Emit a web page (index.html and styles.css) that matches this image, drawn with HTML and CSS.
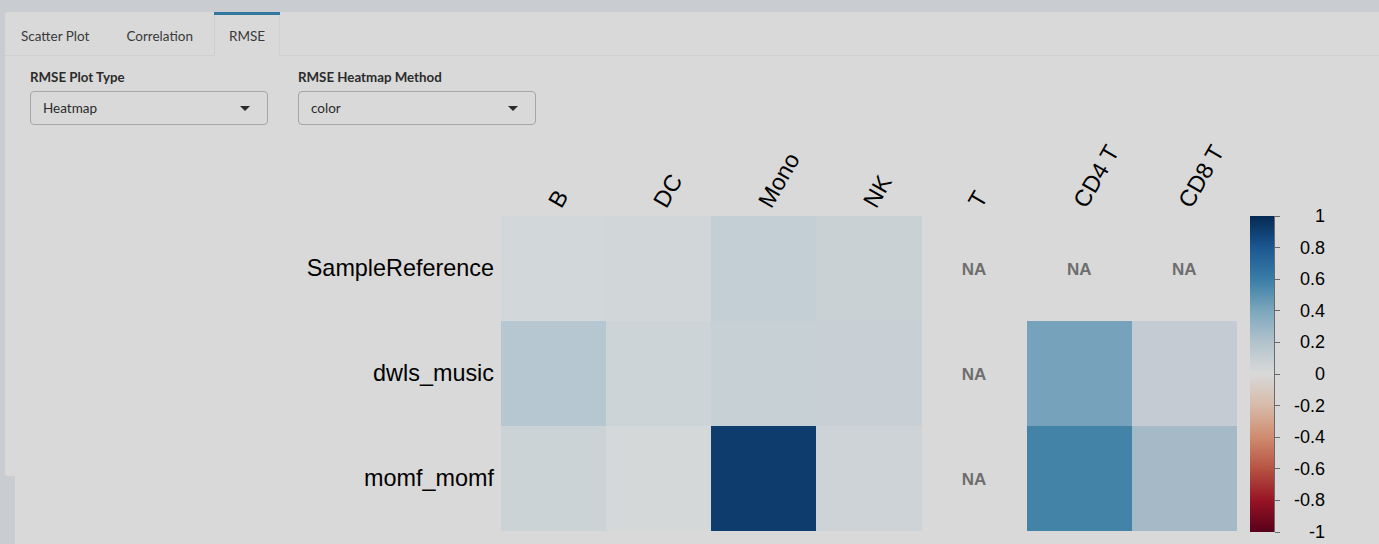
FILE: index.html
```html
<!DOCTYPE html>
<html>
<head>
<meta charset="utf-8">
<link rel="stylesheet" href="styles.css">
</head>
<body>
<div class="page">
  <div class="card">
    <ul class="tabs">
      <li class="tab"><a>Scatter Plot</a></li>
      <li class="tab"><a>Correlation</a></li>
      <li class="tab active"><a>RMSE</a></li>
    </ul>
    <div class="tab-content">
      <div class="form-row">
        <div class="col">
          <label class="control-label">RMSE Plot Type</label>
          <div class="select"><span>Heatmap</span><i class="caret"></i></div>
        </div>
        <div class="col">
          <label class="control-label">RMSE Heatmap Method</label>
          <div class="select"><span>color</span><i class="caret"></i></div>
        </div>
      </div>
      <div class="plot">
        <div class="row-labels">
          <div class="row-label">SampleReference</div>
          <div class="row-label">dwls_music</div>
          <div class="row-label">momf_momf</div>
        </div>
        <div class="plot-main">
          <div class="col-heads">
            <div class="col-head"><span>B</span></div>
            <div class="col-head"><span>DC</span></div>
            <div class="col-head"><span>Mono</span></div>
            <div class="col-head"><span>NK</span></div>
            <div class="col-head"><span>T</span></div>
            <div class="col-head"><span>CD4 T</span></div>
            <div class="col-head"><span>CD8 T</span></div>
          </div>
          <div class="cells">
            <div class="cell" style="background:#d2d7da"></div>
            <div class="cell" style="background:#d1d6d9"></div>
            <div class="cell" style="background:#c3cfd5"></div>
            <div class="cell" style="background:#c9d1d5"></div>
            <div class="cell na">NA</div>
            <div class="cell na">NA</div>
            <div class="cell na">NA</div>

            <div class="cell" style="background:#b7c7d1"></div>
            <div class="cell" style="background:#cdd4d8"></div>
            <div class="cell" style="background:#c6d0d5"></div>
            <div class="cell" style="background:#c8d0d5"></div>
            <div class="cell na">NA</div>
            <div class="cell" style="background:#76a2bb"></div>
            <div class="cell" style="background:#c4cbd2"></div>

            <div class="cell" style="background:#cbd3d7"></div>
            <div class="cell" style="background:#d5d8d9"></div>
            <div class="cell" style="background:#0e3d6d"></div>
            <div class="cell" style="background:#cdd3d6"></div>
            <div class="cell na">NA</div>
            <div class="cell" style="background:#4283a7"></div>
            <div class="cell" style="background:#a5b9c7"></div>
          </div>
        </div>
        <div class="legend">
          <div class="bar"></div>
          <div class="scale">
            <div class="tick" style="top:0%"><span>1</span></div>
            <div class="tick" style="top:10%"><span>0.8</span></div>
            <div class="tick" style="top:20%"><span>0.6</span></div>
            <div class="tick" style="top:30%"><span>0.4</span></div>
            <div class="tick" style="top:40%"><span>0.2</span></div>
            <div class="tick" style="top:50%"><span>0</span></div>
            <div class="tick" style="top:60%"><span>-0.2</span></div>
            <div class="tick" style="top:70%"><span>-0.4</span></div>
            <div class="tick" style="top:80%"><span>-0.6</span></div>
            <div class="tick" style="top:90%"><span>-0.8</span></div>
            <div class="tick" style="top:100%"><span>-1</span></div>
          </div>
        </div>
      </div>
    </div>
  </div>
</div>
</body>
</html>
```

FILE: styles.css
```css
html, body {
  margin: 0;
  padding: 0;
  background: #c9ccd0;
  overflow: hidden;
  height: 544px;
}
body {
  font-family: "Lato", "Open Sans", sans-serif;
  font-size: 13.5px;
  color: #2b2b2b;
}
.page {
  padding: 12px 0 0 5px;
}
.card {
  width: 1390px;
  height: 464px;
  background: #d9d9d9;
  border-radius: 3px 0 0 3px;
}
.tabs {
  display: flex;
  list-style: none;
  margin: 0;
  padding: 0;
  height: 43px;
  border-bottom: 1px solid #cfcfcf;
}
.tab {
  border-top: 3px solid transparent;
  margin-right: 5px;
  margin-bottom: -2px;
  height: 42px;
}
.tab a {
  display: block;
  padding: 11px 15px 9px;
  line-height: 20px;
  border: 1px solid transparent;
  border-top: 0;
  color: #3a3a3a;
}
.tab.active {
  border-top-color: #3378a0;
}
.tab.active a {
  background: #d9d9d9;
  border-left-color: #cfcfcf;
  border-right-color: #cfcfcf;
  height: 21px;
  padding-left: 14px;
  padding-right: 14px;
}
.tab-content {
  padding: 10px;
}
.form-row {
  display: flex;
  margin-bottom: 15px;
}
.col {
  width: 238px;
  padding: 0 15px;
}
.control-label {
  display: block;
  font-weight: 700;
  font-size: 13.3px;
  line-height: 20px;
  margin-bottom: 5px;
  padding-top: 1px;
  height: 19px;
  color: #2b2b2b;
}
.select {
  position: relative;
  height: 32px;
  border: 1px solid #a6a6a6;
  border-radius: 4px;
  padding: 0 12px;
  display: flex;
  align-items: center;
  font-size: 13.5px;
  color: #2b2b2b;
}
.caret {
  position: absolute;
  right: 17px;
  top: 14px;
  width: 0;
  height: 0;
  border-style: solid;
  border-width: 5px 5px 0 5px;
  border-color: #2b2b2b transparent transparent transparent;
}

/* plot */
.plot {
  display: flex;
  width: 1364px;
  height: 420px;
  background: #d9d9d9;
  font-family: "Liberation Sans", Arial, sans-serif;
  color: #000;
}
.row-labels {
  width: 479px;
  margin-right: 7px;
  padding-top: 76px;
  display: flex;
  flex-direction: column;
}
.row-label {
  height: 105px;
  display: flex;
  align-items: center;
  justify-content: flex-end;
  font-size: 23.4px;
}
.plot-main {
  width: 736px;
}
.col-heads {
  display: grid;
  grid-template-columns: repeat(7, 105.14px);
  height: 76px;
}
.col-head {
  position: relative;
}
.col-head span {
  position: absolute;
  left: 60.5px;
  top: 50px;
  font-size: 23.4px;
  line-height: 1;
  white-space: nowrap;
  transform-origin: 0 0.8465em;
  transform: rotate(-60deg);
}
.cells {
  display: grid;
  grid-template-columns: repeat(7, 105.14px);
  grid-auto-rows: 105px;
}
.cell.na {
  display: flex;
  align-items: center;
  justify-content: center;
  font-weight: 700;
  font-size: 17px;
  color: #6e6e6e;
  padding-top: 2px;
  box-sizing: border-box;
}
.legend {
  display: flex;
  margin-left: 13px;
  padding-top: 76px;
}
.bar {
  width: 24px;
  height: 316px;
  border-right: 1px solid #6a6a6a;
  background: linear-gradient(to bottom,
    #042952 0%, #1c5792 10%, #397da6 20%, #7ca7bd 30%, #b2c3cc 40%,
    #d9d9d9 50%, #d7baa9 60%, #cf8c6f 70%, #b65242 80%, #971425 90%, #58001a 100%);
}
.scale {
  position: relative;
  width: 50px;
  height: 316px;
}
.tick {
  position: absolute;
  left: 0;
  width: 50px;
  height: 0;
}
.tick::before {
  content: "";
  position: absolute;
  left: 0;
  top: -0.5px;
  width: 5px;
  height: 1px;
  background: #6a6a6a;
}
.tick span {
  position: absolute;
  right: 0;
  top: -11px;
  font-size: 18px;
  line-height: 22px;
}
```
